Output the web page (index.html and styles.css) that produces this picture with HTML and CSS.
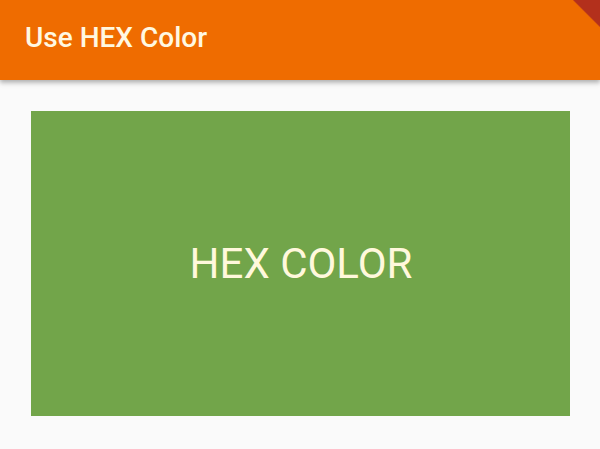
FILE: index.html
```html
<!DOCTYPE html>
<html>
<head>
<meta charset="utf-8">
<link rel="stylesheet" href="styles.css">
</head>
<body>
<header class="appbar">
  <h1 class="title">Use HEX Color</h1>
</header>
<main class="content">
  <div class="box">
    <span class="box-text">HEX COLOR</span>
  </div>
</main>
<div class="banner"></div>
</body>
</html>
```
FILE: styles.css
```css
html, body {
  margin: 0;
  padding: 0;
}
body {
  width: 600px;
  height: 449px;
  overflow: hidden;
  background: #fafafa;
  font-family: Roboto, "Noto Sans", sans-serif;
  position: relative;
}
.appbar {
  height: 80px;
  background: #ef6c00;
  display: flex;
  align-items: center;
  padding-left: 25px;
  box-shadow: 0 2px 4px rgba(0,0,0,0.2), 0 4px 5px rgba(0,0,0,0.12);
  position: relative;
  z-index: 1;
}
.title {
  margin: 0 0 6px 0;
  font-size: 28px;
  font-weight: 500;
  color: #fff8e1;
  letter-spacing: 0;
}
.content {
  padding: 31px 30px 0 31px;
}
.box {
  height: 305px;
  background: #72a54a;
  display: flex;
  align-items: center;
  justify-content: center;
}
.box-text {
  font-size: 42px;
  color: #fff8dc;
  font-weight: 400;
  margin-left: 1px;
}
.banner {
  position: absolute;
  top: 0;
  right: 0;
  width: 27px;
  height: 27px;
  z-index: 2;
  background: linear-gradient(to bottom left, #b3301c 48%, rgba(179,48,28,0.5) 50%, transparent 52%);
}
```
